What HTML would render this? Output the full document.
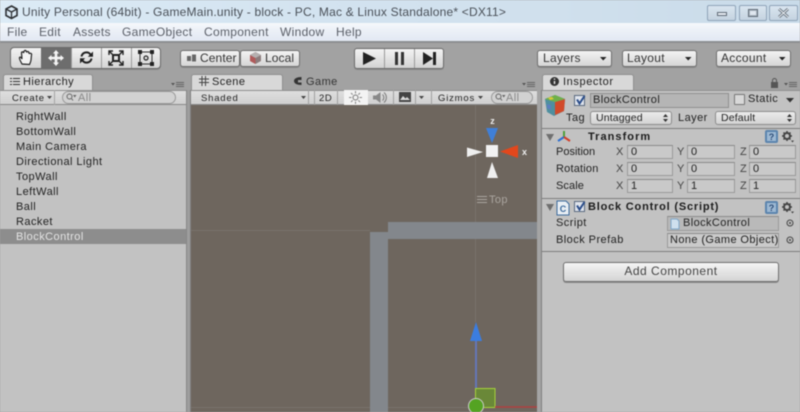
<!DOCTYPE html>
<html><head><meta charset="utf-8">
<style>
html,body{margin:0;padding:0;background:#a2a2a2}
body{width:800px;height:412px;overflow:hidden;position:relative;font-family:"Liberation Sans",sans-serif;font-size:11px;color:#222}
#w{position:absolute;left:0;top:0;width:800px;height:412px;overflow:hidden;filter:blur(.4px)}
.a{position:absolute;box-sizing:border-box}
.t{position:absolute;white-space:nowrap;line-height:14px;letter-spacing:.45px}
.btn{position:absolute;box-sizing:border-box;border:1px solid #6e6e6e;background:linear-gradient(#f4f4f4,#d6d6d6);border-radius:3px;box-shadow:0 1px 0 #8a8a8a}
.fld{position:absolute;box-sizing:border-box;background:#c9c9c9;border:1px solid #9a9a9a;border-top-color:#8a8a8a;line-height:12px;padding-left:3px;font-size:11px;letter-spacing:.4px;white-space:nowrap;overflow:hidden}
.dd{position:absolute;box-sizing:border-box;background:linear-gradient(#ececec,#d2d2d2);border:1px solid #8c8c8c;border-radius:3px;line-height:12px;padding-left:5px;font-size:10.5px;letter-spacing:.15px;color:#222}
.sep{position:absolute;background:#7d7d7d;height:1px}
.m{font-size:12px;color:#5b5f68;letter-spacing:.3px;top:25px}
svg{position:absolute;overflow:visible}
</style></head><body><div id="w">

<!-- title bar -->
<div class="a" style="left:0;top:0;width:800px;height:23px;background:linear-gradient(90deg,#dcebf6,#d3e3f0 40%,#d0e0ed 70%,#c9dbe9)"></div>
<div class="a" style="left:0;top:23px;width:800px;height:18px;background:linear-gradient(#f6f9fc 0,#eef2f8 30%,#e2e8f3)"></div>
<div class="a" style="left:0;top:41px;width:800px;height:2px;background:#8d8f91"></div>
<svg style="left:4px;top:5px" width="15" height="15" viewBox="0 0 15 15"><path d="M7.5 1L13 4v6.5L7.500 13.500 2 10.500V4z" fill="none" stroke="#2c2f33" stroke-width="1.600"/><path d="M7.500 7V13M7.500 7L2 4M7.500 7L13 4" stroke="#2c2f33" stroke-width="1.300"/></svg>
<div class="t" style="left:22px;top:5px;font-size:12px;color:#4a5058;letter-spacing:.2px">Unity Personal (64bit) - GameMain.unity - block - PC, Mac &amp; Linux Standalone* &lt;DX11&gt;</div>
<!-- window buttons -->
<div class="a" style="left:707px;top:5px;width:29px;height:16px;border:1px solid #8fa3b8;border-radius:2px;background:linear-gradient(#d9e5ef,#c5d3e0)"></div>
<div class="a" style="left:717px;top:12px;width:10px;height:4px;border:1px solid #5f6a76;background:#e8eef4"></div>
<div class="a" style="left:739px;top:5px;width:28px;height:16px;border:1px solid #8fa3b8;border-radius:2px;background:linear-gradient(#d9e5ef,#c5d3e0)"></div>
<div class="a" style="left:748px;top:9px;width:10px;height:8px;border:1px solid #5f6a76;background:#dfe7ef;box-shadow:inset 0 0 0 1px #aab5c0"></div>
<div class="a" style="left:769px;top:5px;width:29px;height:16px;border:1px solid #8fa3b8;border-radius:2px;background:linear-gradient(#d9e5ef,#c5d3e0)"></div>
<svg style="left:777px;top:8px" width="13" height="10"><path d="M2 1L11 9M11 1L2 9" stroke="#5f6a76" stroke-width="2.800"/><path d="M2 1L11 9M11 1L2 9" stroke="#eef2f6" stroke-width="1.100"/></svg>

<!-- menu -->
<div class="t m" style="left:7px">File</div>
<div class="t m" style="left:39px">Edit</div>
<div class="t m" style="left:73px">Assets</div>
<div class="t m" style="left:122px">GameObject</div>
<div class="t m" style="left:204px">Component</div>
<div class="t m" style="left:280px">Window</div>
<div class="t m" style="left:336px">Help</div>

<!-- transform tools -->
<div class="a" style="left:10px;top:47px;width:151px;height:22px;border:1px solid #6a6a6a;border-radius:4px;background:linear-gradient(#f3f3f3,#d4d4d4);box-shadow:0 1px 0 #8a8a8a"></div>
<div class="a" style="left:41px;top:48px;width:30px;height:20px;background:#6d6d6d"></div>
<div class="a" style="left:71px;top:48px;width:1px;height:20px;background:#999"></div>
<div class="a" style="left:101px;top:48px;width:1px;height:20px;background:#999"></div>
<div class="a" style="left:131px;top:48px;width:1px;height:20px;background:#999"></div>
<svg style="left:18px;top:49px" width="16" height="17" viewBox="0 0 16 17"><path d="M4 15C2.500 12 1 10 1.500 8.500 2.500 7.500 3.500 9 4 10L3.500 4C3.500 2.500 5.500 2.500 5.500 4L6 2.500C6.500 1 8 1 8.200 2.500L8.700 3C9.500 2 11 2.500 10.800 4L11.500 4.500C12.500 4 14 4.500 13.500 6L13 11C12.800 13 12 14 11.500 15.500Z" fill="#f4f4f4" stroke="#222" stroke-width="1.200"/></svg>
<svg style="left:48px;top:50px" width="16" height="16" viewBox="0 0 16 16"><path d="M8 0L11 3.500H9.300V6.700H12.500V5L16 8L12.500 11V9.300H9.300V12.500H11L8 16L5 12.500H6.700V9.300H3.500V11L0 8L3.500 5V6.700H6.700V3.500H5Z" fill="#f5f5f5"/></svg>
<svg style="left:79px;top:50px" width="15" height="15" viewBox="0 0 15 15"><path d="M2.500 6.500A5 5 0 0 1 11.500 4.500M12.500 8.500A5 5 0 0 1 3.500 10.500" fill="none" stroke="#222" stroke-width="2"/><path d="M14 1.500V6.800H8.800ZM1 13.500V8.200H6.200Z" fill="#222"/></svg>
<svg style="left:108px;top:50px" width="16" height="16" viewBox="0 0 16 16"><rect x="5" y="5" width="6" height="6" fill="none" stroke="#222" stroke-width="2"/><path d="M1 5V1H5M11 1H15V5M15 11V15H11M5 15H1V11M1.500 1.500L4.500 4.500M14.500 1.500L11.500 4.500M14.500 14.500L11.500 11.500M1.500 14.500L4.500 11.500" fill="none" stroke="#222" stroke-width="1.400"/></svg>
<svg style="left:138px;top:50px" width="16" height="16" viewBox="0 0 16 16"><rect x="2" y="2" width="12" height="12" fill="none" stroke="#333" stroke-width="1"/><circle cx="8" cy="8" r="2" fill="none" stroke="#222" stroke-width="1.200"/><path d="M0 0h4v4H0zM12 0h4v4h-4zM0 12h4v4H0zM12 12h4v4h-4z" fill="#222"/></svg>

<!-- center/local -->
<div class="btn" style="left:180px;top:50px;width:60px;height:17px"></div>
<div class="btn" style="left:240px;top:50px;width:60px;height:17px"></div>
<svg style="left:187px;top:53px" width="10" height="10"><path d="M0 3h4v5H0zM5 1.500h4v7H5z" fill="#666"/></svg>
<div class="t" style="left:200px;top:51px;color:#333;font-size:12px;letter-spacing:.1px">Center</div>
<svg style="left:250px;top:52px" width="11" height="12" viewBox="0 0 11 12"><path d="M5.500 0L11 3v6l-5.500 3L0 9V3z" fill="#8c7c7c"/><path d="M5.500 6v6L0 9V3z" fill="#b05a5a"/><path d="M5.500 0L11 3 5.500 6 0 3z" fill="#b5b0b0"/></svg>
<div class="t" style="left:265px;top:51px;color:#333;font-size:12px;letter-spacing:.1px">Local</div>

<!-- play -->
<div class="a" style="left:354px;top:48px;width:90px;height:21px;border:1px solid #6a6a6a;border-radius:3px;background:linear-gradient(#f3f3f3,#d2d2d2);box-shadow:0 1px 0 #8a8a8a"></div>
<div class="a" style="left:384px;top:49px;width:1px;height:19px;background:#999"></div>
<div class="a" style="left:414px;top:49px;width:1px;height:19px;background:#999"></div>
<svg style="left:362px;top:52px" width="16" height="13"><path d="M1 0L14 6.500 1 13z" fill="#222"/></svg>
<svg style="left:394px;top:52px" width="12" height="13"><path d="M1 0h3v13H1zM7 0h3v13H7z" fill="#333"/></svg>
<svg style="left:422px;top:52px" width="16" height="13"><path d="M1 0L11 6.500 1 13zM11 0h3v13h-3z" fill="#222"/></svg>

<!-- layers etc -->
<div class="btn" style="left:537px;top:50px;width:75px;height:17px"></div>
<div class="t" style="left:543px;top:51px;color:#333;font-size:12px;letter-spacing:.3px">Layers</div>
<svg style="left:600px;top:57px" width="7" height="4"><path d="M0 0h6.500L3.200 3.500z" fill="#222"/></svg>
<div class="btn" style="left:622px;top:50px;width:75px;height:17px"></div>
<div class="t" style="left:627px;top:51px;color:#333;font-size:12px;letter-spacing:.3px">Layout</div>
<svg style="left:685px;top:57px" width="7" height="4"><path d="M0 0h6.500L3.200 3.500z" fill="#222"/></svg>
<div class="btn" style="left:716px;top:50px;width:75px;height:17px"></div>
<div class="t" style="left:721px;top:51px;color:#333;font-size:12px;letter-spacing:.3px">Account</div>
<svg style="left:779px;top:57px" width="7" height="4"><path d="M0 0h6.500L3.200 3.500z" fill="#222"/></svg>

<!-- tab strips -->
<div class="a" style="left:3px;top:74px;width:90px;height:17px;background:#d8d8d8;border:1px solid #8f8f8f;border-bottom:0;border-radius:3px 3px 0 0"></div>
<svg style="left:10px;top:78px" width="10" height="8"><path d="M0 .5h2M3 .5h7M0 3.500h2M3 3.500h7M0 6.500h2M3 6.500h7" stroke="#333"/></svg>
<div class="t" style="left:23px;top:75px;color:#222">Hierarchy</div>
<svg style="left:171px;top:82px" width="14" height="6"><path d="M0 1h4L2 3.500z" fill="#555"/><path d="M5 .5h8M5 2.500h8M5 4.500h8" stroke="#666"/></svg>

<div class="a" style="left:191px;top:74px;width:92px;height:17px;background:#d8d8d8;border:1px solid #8f8f8f;border-bottom:0;border-radius:3px 3px 0 0"></div>
<svg style="left:199px;top:76px" width="10" height="10"><path d="M3 0v10M6.500 0v10M0 3h10M0 6.500h10" stroke="#444"/></svg>
<div class="t" style="left:212px;top:75px;color:#222">Scene</div>
<svg style="left:294px;top:77px" width="9" height="8"><path d="M7.500 0C3 0 0 1.500 0 4s3 4 7.500 4V5.500H4V3h3.500z" fill="#333"/></svg>
<div class="t" style="left:306px;top:75px;color:#333">Game</div>
<svg style="left:522px;top:82px" width="14" height="6"><path d="M0 1h4L2 3.500z" fill="#555"/><path d="M5 .5h8M5 2.500h8M5 4.500h8" stroke="#666"/></svg>

<div class="a" style="left:542px;top:74px;width:92px;height:17px;background:#d8d8d8;border:1px solid #8f8f8f;border-bottom:0;border-radius:3px 3px 0 0"></div>
<svg style="left:550px;top:77px" width="9" height="9"><circle cx="4.500" cy="4.500" r="4.500" fill="#333"/><path d="M4.500 1.500v1.300M4.500 4v3" stroke="#eee" stroke-width="1.400"/></svg>
<div class="t" style="left:563px;top:75px;color:#222;letter-spacing:.6px">Inspector</div>
<svg style="left:770px;top:78px" width="10" height="10"><path d="M1 4h7v6H1z" fill="#555"/><path d="M2.500 4V2.500a2 2 0 0 1 4 0V4" fill="none" stroke="#555"/></svg>
<svg style="left:784px;top:82px" width="14" height="6"><path d="M0 1h4L2 3.500z" fill="#555"/><path d="M5 .5h8M5 2.500h8M5 4.500h8" stroke="#666"/></svg>

<!-- hierarchy -->
<div class="a" style="left:0;top:90px;width:187px;height:15px;background:linear-gradient(#dedede,#d0d0d0);border-top:1px solid #8f8f8f;border-bottom:1px solid #8a8a8a"></div>
<div class="a" style="left:54px;top:90px;width:1px;height:15px;background:#a5a5a5"></div>
<div class="t" style="left:12px;top:91px;font-size:9.500px;letter-spacing:.7px;color:#222;line-height:15px">Create</div>
<svg style="left:47px;top:96px" width="5" height="4"><path d="M0 0h5L2.500 3z" fill="#444"/></svg>
<div class="a" style="left:62px;top:91px;width:114px;height:13px;border:1px solid #999;border-radius:7px;background:#d2d2d2"></div>
<svg style="left:66px;top:93px" width="11" height="9"><circle cx="3.500" cy="3.500" r="2.500" fill="none" stroke="#666"/><path d="M5.500 5.500L7 7.500" stroke="#666"/><path d="M7 2h3.500L8.700 4.500z" fill="#666"/></svg>
<div class="t" style="left:78px;top:91px;color:#888">All</div>
<div class="a" style="left:0;top:105px;width:187px;height:307px;background:#c2c2c2"></div>
<div class="a" style="left:186px;top:90px;width:5px;height:322px;background:#9e9e9e;border-left:1px solid #878787;border-right:1px solid #7f7f7f"></div>
<div class="t" style="left:16px;top:110px">RightWall</div>
<div class="t" style="left:16px;top:125px">BottomWall</div>
<div class="t" style="left:16px;top:140px">Main Camera</div>
<div class="t" style="left:16px;top:155px">Directional Light</div>
<div class="t" style="left:16px;top:170px">TopWall</div>
<div class="t" style="left:16px;top:185px">LeftWall</div>
<div class="t" style="left:16px;top:200px">Ball</div>
<div class="t" style="left:16px;top:215px">Racket</div>
<div class="a" style="left:0;top:229px;width:186px;height:15px;background:#8d8d8d"></div>
<div class="t" style="left:16px;top:230px;color:#e4e4e4">BlockControl</div>

<!-- scene toolbar -->
<div class="a" style="left:191px;top:90px;width:346px;height:15px;background:linear-gradient(#dedede,#d0d0d0);border-top:1px solid #8f8f8f;border-bottom:1px solid #8a8a8a"></div>
<div class="t" style="left:201px;top:91px;font-size:9.500px;letter-spacing:.8px;color:#222;line-height:15px">Shaded</div>
<svg style="left:301px;top:96px" width="5" height="4"><path d="M0 0h5L2.500 3z" fill="#444"/></svg>
<div class="a" style="left:308px;top:90px;width:1px;height:15px;background:#a0a0a0"></div>
<div class="a" style="left:314px;top:90px;width:1px;height:15px;background:#a0a0a0"></div>
<div class="t" style="left:319px;top:91px;font-size:9.500px;letter-spacing:.6px;color:#222;line-height:15px">2D</div>
<div class="a" style="left:337px;top:90px;width:1px;height:15px;background:#a0a0a0"></div>
<div class="a" style="left:344px;top:90px;width:24px;height:15px;background:#f3f3f3"></div>
<svg style="left:349px;top:91px" width="13" height="13" viewBox="0 0 13 13"><circle cx="6.500" cy="6.500" r="2.500" fill="none" stroke="#777"/><path d="M6.500 0v2.500M6.500 10.500V13M0 6.500h2.500M10.500 6.500H13M2 2l1.700 1.700M9.300 9.300L11 11M2 11l1.700-1.700M9.300 3.700L11 2" stroke="#888"/></svg>
<svg style="left:373px;top:91px" width="14" height="13"><path d="M0 4.500h3L7.500 1v11L3 8.500H0z" fill="#888"/><path d="M9.500 3.500a4 4 0 0 1 0 6M11 1.500a6.500 6.500 0 0 1 0 10" fill="none" stroke="#777"/></svg>
<div class="a" style="left:393px;top:90px;width:1px;height:15px;background:#a0a0a0"></div>
<svg style="left:399px;top:92px" width="12" height="10"><path d="M0 0h12v10H0z" fill="#444"/><path d="M1 8l3-4 2.500 2.500L8 5l3 3z" fill="#ddd"/></svg>
<div class="a" style="left:415px;top:90px;width:1px;height:15px;background:#a0a0a0"></div>
<svg style="left:419px;top:96px" width="5" height="4"><path d="M0 0h5L2.500 3z" fill="#444"/></svg>
<div class="a" style="left:431px;top:90px;width:1px;height:15px;background:#a0a0a0"></div>
<div class="t" style="left:438px;top:91px;font-size:9.500px;letter-spacing:.8px;color:#222;line-height:15px">Gizmos</div>
<svg style="left:478px;top:96px" width="5" height="4"><path d="M0 0h5L2.500 3z" fill="#444"/></svg>
<div class="a" style="left:491px;top:91px;width:42px;height:13px;border:1px solid #999;border-radius:7px;background:#d2d2d2"></div>
<svg style="left:495px;top:93px" width="11" height="9"><circle cx="3.500" cy="3.500" r="2.500" fill="none" stroke="#666"/><path d="M5.500 5.500L7 7.500" stroke="#666"/><path d="M7 2h3.500L8.700 4.500z" fill="#666"/></svg>
<div class="t" style="left:506px;top:91px;color:#888">All</div>

<!-- scene view -->
<div class="a" style="left:191px;top:105px;width:346px;height:307px;background:#6e665e"></div>
<svg style="left:191px;top:105px" width="346" height="307" viewBox="191 105 346 307">
<path d="M191 230.500H370M191 407.500H475M475.500 105V322" stroke="#78726b" stroke-width="1" fill="none"/>
<path d="M388 222h149v17H388z" fill="#83878c"/>
<path d="M370 232h18v180h-18z" fill="#83878c"/>
<!-- gizmo -->
<path d="M492 143L486 128H498Z" fill="#3f7fd8"/>
<path d="M500 151.500L518 145V158Z" fill="#e2471c"/>
<path d="M483 152L467 147.500V157Z" fill="#efefef"/>
<path d="M492 162L487 178H498Z" fill="#efefef"/>
<rect x="486" y="145" width="12" height="12" fill="#f2f2f2"/>
<text x="492.500" y="124" font-size="9" font-weight="700" fill="#eee" text-anchor="middle" font-family="Liberation Sans">z</text>
<text x="524.500" y="155" font-size="9" font-weight="700" fill="#eee" text-anchor="middle" font-family="Liberation Sans">x</text>
<path d="M477 196.500h10M477 199.500h10M477 202.500h10" stroke="#aaa59f"/>
<text x="489" y="203" font-size="11" fill="#aaa59f" letter-spacing=".4" font-family="Liberation Sans">Top</text>
<!-- handles -->
<path d="M476 341V389" stroke="#6476b8" stroke-width="2"/>
<path d="M476 322L470 341H482Z" fill="#3b7de0"/>
<rect x="475.500" y="388.500" width="19.500" height="19" fill="#6a8838" stroke="#a5d23c"/>
<circle cx="476" cy="406" r="7.500" fill="#54a322" stroke="#ccc" stroke-width="1"/>
<path d="M495 407H537" stroke="#b04040" stroke-width="1.500"/>
</svg>
<div class="a" style="left:537px;top:90px;width:5px;height:322px;background:#a4a4a4;border-right:1px solid #808080"></div>

<!-- inspector -->
<div class="a" style="left:542px;top:90px;width:258px;height:322px;background:#c2c2c2;border-top:1px solid #8f8f8f"></div>
<svg style="left:544px;top:95px" width="22" height="23" viewBox="0 0 22 23"><path d="M1 4L11 0 21 4 20 16 10 21 3 17Z" fill="#4f8f9f"/><path d="M11 7L21 4 20 16 11 20Z" fill="#d24a2a"/><path d="M1 4L11 0 21 4 11 7Z" fill="#6fb04a"/><path d="M4 2.500L8 2l2 2-4 1z" fill="#d8c83a"/><path d="M3 9l4 1v5l-4-2z" fill="#5b7fbf"/></svg>
<div class="a" style="left:574px;top:95px;width:11px;height:11px;border:1px solid #5a6a80;background:#dfe4ec"></div>
<svg style="left:575px;top:95px" width="11" height="11"><path d="M2 4.500L4.500 8.500 9.500 1" fill="none" stroke="#2b4d8a" stroke-width="2"/></svg>
<div class="fld" style="left:590px;top:93px;width:139px;height:15px;background:#b5b5b5;border-color:#8f8f8f;line-height:13px;font-size:11px;padding-left:2px">BlockControl</div>
<div class="a" style="left:734px;top:94px;width:11px;height:11px;border:1px solid #777;background:#d8d8d8;border-radius:1px"></div>
<div class="t" style="left:748px;top:92px">Static</div>
<svg style="left:786px;top:98px" width="9" height="5"><path d="M0 0h8L4 4.500z" fill="#333"/></svg>
<div class="t" style="left:566px;top:111px;color:#222">Tag</div>
<div class="dd" style="left:590px;top:111px;width:82px;height:14px">Untagged</div>
<svg style="left:663px;top:114px" width="5" height="8"><path d="M2.500 0L5 3H0zM2.500 8L0 5h5z" fill="#333"/></svg>
<div class="t" style="left:678px;top:111px;color:#222">Layer</div>
<div class="dd" style="left:715px;top:111px;width:81px;height:14px">Default</div>
<svg style="left:787px;top:114px" width="5" height="8"><path d="M2.500 0L5 3H0zM2.500 8L0 5h5z" fill="#333"/></svg>
<div class="sep" style="left:542px;top:128px;width:258px"></div>

<!-- transform -->
<svg style="left:546px;top:134px" width="8" height="7"><path d="M0 0h8L4 7z" fill="#6f6f6f"/></svg>
<svg style="left:557px;top:130px" width="14" height="13" viewBox="0 0 14 13"><path d="M7 7V1" stroke="#4fa03a" stroke-width="2"/><path d="M7 7L1 11" stroke="#2f6fd0" stroke-width="2"/><path d="M7 7L13 11" stroke="#d23f2a" stroke-width="2"/></svg>
<div class="t" style="left:588px;top:130px;font-weight:700;letter-spacing:1.050px;color:#1c1c1c">Transform</div>
<svg style="left:765px;top:130px" width="13" height="13"><rect width="13" height="13" rx="2" fill="#5b84ad"/><rect x="2" y="2" width="9" height="9" fill="#9db8d3"/><text x="6.500" y="10" font-size="9" font-weight="700" text-anchor="middle" fill="#2d4d77" font-family="Liberation Sans">?</text></svg>
<svg style="left:781px;top:130px" width="13" height="13" viewBox="0 0 13 13"><circle cx="6" cy="6" r="3" fill="none" stroke="#444" stroke-width="2"/><path d="M6 1v2M6 9v2M1 6h2M9 6h2M2.500 2.500l1.500 1.500M8 8l1.500 1.500M2.500 9.500L4 8M8 4l1.500-1.500" stroke="#444" stroke-width="1.500"/><path d="M10 10.500h3l-1.500 2z" fill="#444"/></svg>

<div class="t" style="left:556px;top:145px;letter-spacing:0">Position</div>
<div class="t" style="left:556px;top:162px;letter-spacing:.2px">Rotation</div>
<div class="t" style="left:556px;top:179px;letter-spacing:.1px">Scale</div>
<div class="t" style="left:616px;top:145px;color:#444">X</div><div class="fld" style="left:627px;top:145px;width:46px;height:14px">0</div>
<div class="t" style="left:677px;top:145px;color:#444">Y</div><div class="fld" style="left:687px;top:145px;width:48px;height:14px">0</div>
<div class="t" style="left:740px;top:145px;color:#444">Z</div><div class="fld" style="left:749px;top:145px;width:47px;height:14px">0</div>
<div class="t" style="left:616px;top:162px;color:#444">X</div><div class="fld" style="left:627px;top:162px;width:46px;height:14px">0</div>
<div class="t" style="left:677px;top:162px;color:#444">Y</div><div class="fld" style="left:687px;top:162px;width:48px;height:14px">0</div>
<div class="t" style="left:740px;top:162px;color:#444">Z</div><div class="fld" style="left:749px;top:162px;width:47px;height:14px">0</div>
<div class="t" style="left:616px;top:179px;color:#444">X</div><div class="fld" style="left:627px;top:179px;width:46px;height:14px">1</div>
<div class="t" style="left:677px;top:179px;color:#444">Y</div><div class="fld" style="left:687px;top:179px;width:48px;height:14px">1</div>
<div class="t" style="left:740px;top:179px;color:#444">Z</div><div class="fld" style="left:749px;top:179px;width:47px;height:14px">1</div>
<div class="sep" style="left:542px;top:198px;width:258px"></div>

<!-- script -->
<svg style="left:546px;top:204px" width="8" height="7"><path d="M0 0h8L4 7z" fill="#6f6f6f"/></svg>
<svg style="left:557px;top:201px" width="12" height="14"><path d="M0 0h9l3 3v11H0z" fill="#e8eef4" stroke="#3c6a9c"/><text x="6" y="11" font-size="9" font-weight="700" text-anchor="middle" fill="#3c6a9c" font-family="Liberation Sans">C</text></svg>
<div class="a" style="left:574px;top:201px;width:11px;height:11px;border:1px solid #5a6a80;background:#dfe4ec"></div>
<svg style="left:575px;top:201px" width="11" height="11"><path d="M2 4.500L4.500 8.500 9.500 1" fill="none" stroke="#2b4d8a" stroke-width="2"/></svg>
<div class="t" style="left:588px;top:200px;font-weight:700;letter-spacing:.8px;color:#1c1c1c">Block Control (Script)</div>
<svg style="left:765px;top:201px" width="13" height="13"><rect width="13" height="13" rx="2" fill="#5b84ad"/><rect x="2" y="2" width="9" height="9" fill="#9db8d3"/><text x="6.500" y="10" font-size="9" font-weight="700" text-anchor="middle" fill="#2d4d77" font-family="Liberation Sans">?</text></svg>
<svg style="left:781px;top:201px" width="13" height="13" viewBox="0 0 13 13"><circle cx="6" cy="6" r="3" fill="none" stroke="#444" stroke-width="2"/><path d="M6 1v2M6 9v2M1 6h2M9 6h2M2.500 2.500l1.500 1.500M8 8l1.500 1.500M2.500 9.500L4 8M8 4l1.500-1.500" stroke="#444" stroke-width="1.500"/><path d="M10 10.500h3l-1.500 2z" fill="#444"/></svg>
<div class="t" style="left:556px;top:216px">Script</div>
<div class="t" style="left:556px;top:233px">Block Prefab</div>
<div class="fld" style="left:667px;top:216px;width:112px;height:15px;background:#b9b9b9;padding-left:15px;line-height:13px">BlockControl</div>
<svg style="left:670px;top:219px" width="10" height="10"><path d="M1 0h6l2 2v8H1z" fill="#cfe0ee" stroke="#7fa6c7"/></svg>
<div class="fld" style="left:667px;top:233px;width:112px;height:15px;line-height:13px;padding-left:2px;background:#cacaca">None (Game Object)</div>
<svg style="left:786px;top:219px" width="8" height="8"><circle cx="4" cy="4" r="3" fill="none" stroke="#444"/><circle cx="4" cy="4" r="1" fill="#444"/></svg>
<svg style="left:786px;top:236px" width="8" height="8"><circle cx="4" cy="4" r="3" fill="none" stroke="#444"/><circle cx="4" cy="4" r="1" fill="#444"/></svg>
<div class="sep" style="left:542px;top:251px;width:258px"></div>
<div class="btn" style="left:563px;top:262px;width:216px;height:20px;text-align:center;line-height:17px;font-size:12px;letter-spacing:.5px;color:#444;background:linear-gradient(#f5f5f5,#d3d3d3)">Add Component</div>

</div></body></html>
